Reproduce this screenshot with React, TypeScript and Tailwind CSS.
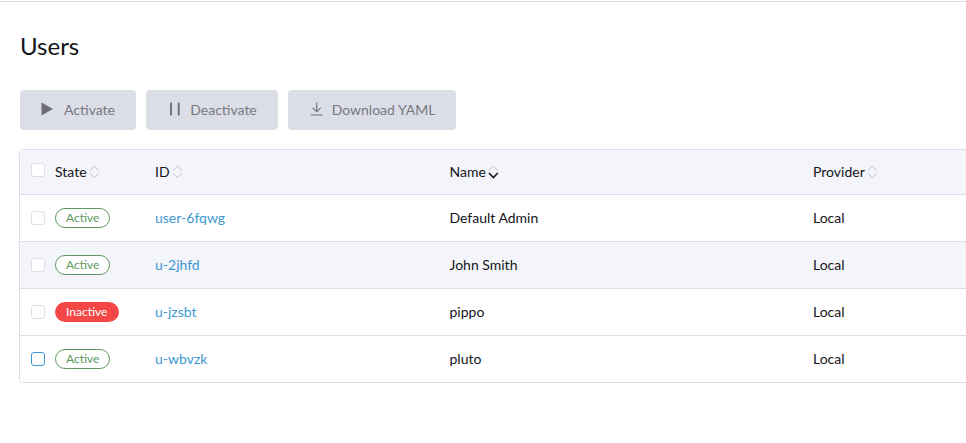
const users = [
  { id: "user-6fqwg", name: "Default Admin", active: true, striped: false, focused: false },
  { id: "u-2jhfd", name: "John Smith", active: true, striped: true, focused: false },
  { id: "u-jzsbt", name: "pippo", active: false, striped: false, focused: false },
  { id: "u-wbvzk", name: "pluto", active: true, striped: false, focused: true },
];

const gridCols = "grid grid-cols-[24px_100px_294.5px_363.5px_1fr] items-center";

const SortIcon = ({ down = false }: { down?: boolean }) => (
  <svg width="12" height="16" viewBox="0 0 12 16" fill="none" className="ml-[1px]">
    <path d="M2 6.6 L6.4 2 L10.8 6.6" stroke="#bfc1cb" strokeWidth="1" />
    <path
      d="M2 9 L6.4 13.6 L10.8 9"
      stroke={down ? "#141419" : "#bfc1cb"}
      strokeWidth={down ? 1.6 : 1}
    />
  </svg>
);

const Checkbox = ({ focused = false }: { focused?: boolean }) => (
  <div
    className={`w-[14px] h-[14px] rounded-[3px] bg-white border ${
      focused ? "border-[#3d98d3]" : "border-[#dcdee7]"
    }`}
  ></div>
);

const ActionButton = ({ icon, label, width }: { icon: React.ReactNode; label: string; width: string }) => (
  <div className={`${width} h-10 pr-[1px] pb-[2px] flex items-center justify-center rounded-[4px] bg-[#dcdee7] text-[#77787f] text-[14px]`}>
    <span className="w-[14px] h-[14px] mr-[10px] mb-[1px] flex items-center justify-center">{icon}</span>
    {label}
  </div>
);

const HeaderCell = ({ label, down = false }: { label: string; down?: boolean }) => (
  <div className="flex items-center text-[14px] text-[#141419]">
    {label}
    <SortIcon down={down} />
  </div>
);

export default function App() {
  return (
    <div className="w-[966px] h-[443px] overflow-hidden bg-white font-['Lato',sans-serif] antialiased">
      {/* Header edge */}
      <div className="h-[1px] mt-[1px] bg-[#dcdee7]"></div>

      <div className="pl-5 w-[1040px]">
        <h1 className="text-[24px] leading-[30px] text-[#141419] mt-[29px]">Users</h1>

        {/* Bulk actions */}
        <div className="flex gap-[10px] mt-[29px]">
          <ActionButton
            width="w-[116px]"
            label="Activate"
            icon={
              <svg width="14" height="14" viewBox="0 0 14 14">
                <path d="M1.5 0.5 L13 7 L1.5 13.5 Z" fill="#6c6c76" />
              </svg>
            }
          />
          <ActionButton
            width="w-[132px]"
            label="Deactivate"
            icon={
              <svg width="14" height="14" viewBox="0 0 14 14">
                <path d="M5 0.5 V13.5 M12.7 0.5 V13.5" stroke="#6c6c76" strokeWidth="1.8" />
              </svg>
            }
          />
          <ActionButton
            width="w-[168px]"
            label="Download YAML"
            icon={
              <svg width="14" height="14" viewBox="0 0 14 14" fill="none" className="overflow-visible">
                <path d="M8.7 0.5 V9.5 M4.7 5.8 L8.7 9.8 L12.7 5.8 M2.7 13 H14.7" stroke="#6c6c76" strokeWidth="1.1" />
              </svg>
            }
          />
        </div>

        {/* Users table */}
        <div className="mt-[19px] -ml-[1px] border border-[#dcdee7] rounded-[4px] overflow-hidden text-[14px]">
          <div className={`${gridCols} h-[45px] pb-[1px] bg-[#f4f5fa] border-b border-[#dcdee7] pl-[11px]`}>
            <div className="-mt-[3px]">
              <Checkbox />
            </div>
            <HeaderCell label="State" />
            <HeaderCell label="ID" />
            <HeaderCell label="Name" down />
            <HeaderCell label="Provider" />
          </div>
          {users.map((user, index) => (
            <div
              key={user.id}
              className={`${gridCols} pb-[2px] pl-[11px] text-[#141419] ${user.striped ? "bg-[#f4f5fa]" : "bg-white"} ${
                index < users.length - 1 ? "h-[47px] border-b border-[#dcdee7]" : "h-[46px]"
              }`}
            >
              <div className="mt-[2px]">
                <Checkbox focused={user.focused} />
              </div>
              <div>
                {user.active ? (
                  <span className="inline-block h-5 leading-[18px] px-[10px] rounded-[10px] border border-[#5d995d] bg-white text-[#5d995d] text-[12px]">
                    Active
                  </span>
                ) : (
                  <span className="inline-block h-5 leading-5 pl-[11px] pr-[12px] rounded-[10px] bg-[#f64747] text-white text-[12px]">
                    Inactive
                  </span>
                )}
              </div>
              <div className="text-[#3d98d3]">{user.id}</div>
              <div>{user.name}</div>
              <div>Local</div>
            </div>
          ))}
        </div>
      </div>
    </div>
  );
}
